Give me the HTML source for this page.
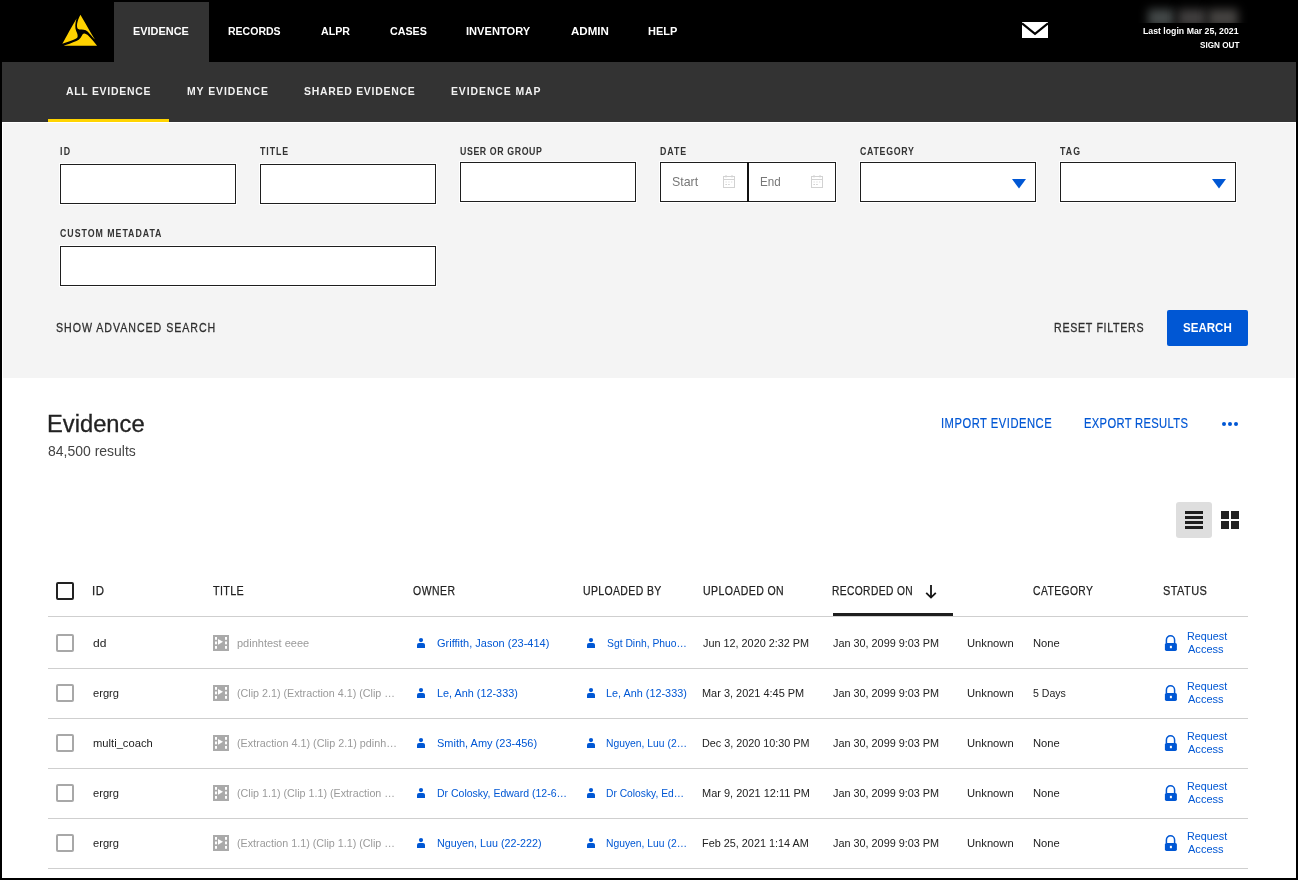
<!DOCTYPE html>
<html><head><meta charset="utf-8"><title>Evidence</title>
<style>
html,body{margin:0;padding:0;}
body{width:1298px;height:880px;overflow:hidden;position:relative;background:#fff;font-family:"Liberation Sans",sans-serif;}
.t{position:absolute;white-space:nowrap;line-height:20px;transform-origin:0 0;}
</style></head><body>
<div style="position:absolute;left:0px;top:0px;width:1298px;height:62px;background:#000"></div>
<div style="position:absolute;left:114px;top:2px;width:95px;height:60px;background:#333"></div>
<svg style="position:absolute;left:55px;top:8px" width="50" height="46" viewBox="0 0 957 880">
<path fill="#ffd200" d="M487,130 C560,260 690,480 765,605 C700,540 640,450 590,425 C540,405 470,420 435,395 C410,360 415,260 487,130 Z"/>
<path fill="#ffd200" d="M412,200 C330,340 220,540 140,685 C250,645 380,605 425,570 C445,540 430,490 405,440 C380,380 385,290 412,200 Z"/>
<path fill="#ffd200" d="M165,722 L805,722 C760,660 690,580 640,530 C600,490 555,470 530,500 C505,545 480,600 410,630 C330,665 230,700 165,722 Z"/>
</svg>
<div class="t" style="left:133.19px;top:21px;font-size:11.6px;font-weight:bold;color:#fff;transform:scaleX(0.9412);">EVIDENCE</div>
<div class="t" style="left:228.32px;top:21px;font-size:11.6px;font-weight:bold;color:#fff;transform:scaleX(0.9078);">RECORDS</div>
<div class="t" style="left:321.23px;top:21px;font-size:11.6px;font-weight:bold;color:#fff;transform:scaleX(0.9185);">ALPR</div>
<div class="t" style="left:389.97px;top:21px;font-size:11.6px;font-weight:bold;color:#fff;transform:scaleX(0.9235);">CASES</div>
<div class="t" style="left:466.18px;top:21px;font-size:11.6px;font-weight:bold;color:#fff;transform:scaleX(0.9582);">INVENTORY</div>
<div class="t" style="left:570.61px;top:21px;font-size:11.6px;font-weight:bold;color:#fff;transform:scaleX(0.9960);">ADMIN</div>
<div class="t" style="left:647.59px;top:21px;font-size:11.6px;font-weight:bold;color:#fff;transform:scaleX(0.9459);">HELP</div>
<svg style="position:absolute;left:1022px;top:22px" width="26" height="16" viewBox="0 0 26 16">
<rect x="0" y="0" width="26" height="16" fill="#fff"/>
<path d="M0,1.3 L13,11.8 L26,1.3" fill="none" stroke="#000" stroke-width="2.2"/>
</svg>
<div style="position:absolute;left:1136px;top:0;width:113px;height:23px;overflow:hidden"><div style="position:absolute;left:12px;top:9px;width:26px;height:18px;background:#434848;filter:blur(5px)"></div><div style="position:absolute;left:42px;top:9px;width:28px;height:18px;background:#403e3e;filter:blur(5px)"></div><div style="position:absolute;left:72px;top:9px;width:30px;height:18px;background:#454341;filter:blur(5px)"></div></div>
<div class="t" style="left:1143.43px;top:21px;font-size:8.7px;font-weight:bold;color:#fff;transform:scaleX(1.0044);">Last login Mar 25, 2021</div>
<div class="t" style="left:1200.05px;top:35px;font-size:8.7px;font-weight:bold;color:#fff;transform:scaleX(0.9397);">SIGN OUT</div>
<div style="position:absolute;left:0px;top:62px;width:1298px;height:60px;background:#333"></div>
<div style="position:absolute;left:48px;top:119px;width:121px;height:3px;background:#ffd400"></div>
<div class="t" style="left:65.94px;top:81px;font-size:11.6px;font-weight:bold;color:#f2f2f2;transform:scaleX(0.9000);letter-spacing:0.814px;">ALL EVIDENCE</div>
<div class="t" style="left:186.62px;top:81px;font-size:11.6px;font-weight:bold;color:#f2f2f2;transform:scaleX(0.9000);letter-spacing:1.025px;">MY EVIDENCE</div>
<div class="t" style="left:303.89px;top:81px;font-size:11.6px;font-weight:bold;color:#f2f2f2;transform:scaleX(0.9000);letter-spacing:0.821px;">SHARED EVIDENCE</div>
<div class="t" style="left:450.72px;top:81px;font-size:11.6px;font-weight:bold;color:#f2f2f2;transform:scaleX(0.9000);letter-spacing:1.014px;">EVIDENCE MAP</div>
<div style="position:absolute;left:3px;top:123px;width:1292px;height:255px;background:#f4f4f4"></div>
<div class="t" style="left:59.73px;top:142px;font-size:10px;font-weight:bold;color:#333;transform:scaleX(0.8800);letter-spacing:1.618px;">ID</div>
<div class="t" style="left:260.11px;top:142px;font-size:10px;font-weight:bold;color:#333;transform:scaleX(0.8800);letter-spacing:1.073px;">TITLE</div>
<div class="t" style="left:459.57px;top:142px;font-size:10px;font-weight:bold;color:#333;transform:scaleX(0.8800);letter-spacing:0.672px;">USER OR GROUP</div>
<div class="t" style="left:659.63px;top:142px;font-size:10px;font-weight:bold;color:#333;transform:scaleX(0.8800);letter-spacing:1.062px;">DATE</div>
<div class="t" style="left:859.75px;top:142px;font-size:10px;font-weight:bold;color:#333;transform:scaleX(0.8800);letter-spacing:0.812px;">CATEGORY</div>
<div class="t" style="left:1060.11px;top:142px;font-size:10px;font-weight:bold;color:#333;transform:scaleX(0.8800);letter-spacing:1.198px;">TAG</div>
<div class="t" style="left:60.05px;top:224px;font-size:10px;font-weight:bold;color:#333;transform:scaleX(0.8800);letter-spacing:1.108px;">CUSTOM METADATA</div>
<div style="position:absolute;left:60px;top:164px;width:176px;height:40px;background:#fff;border:1px solid #1e1e1e;box-sizing:border-box;box-shadow:0 0 0 1px #fff"></div>
<div style="position:absolute;left:260px;top:164px;width:176px;height:40px;background:#fff;border:1px solid #1e1e1e;box-sizing:border-box;box-shadow:0 0 0 1px #fff"></div>
<div style="position:absolute;left:460px;top:162px;width:176px;height:40px;background:#fff;border:1px solid #1e1e1e;box-sizing:border-box;box-shadow:0 0 0 1px #fff"></div>
<div style="position:absolute;left:660px;top:162px;width:176px;height:40px;background:#fff;border:1px solid #1e1e1e;box-sizing:border-box;box-shadow:0 0 0 1px #fff"></div>
<div style="position:absolute;left:747px;top:162px;width:2px;height:40px;background:#111"></div>
<div style="position:absolute;left:860px;top:162px;width:176px;height:40px;background:#fff;border:1px solid #1e1e1e;box-sizing:border-box;box-shadow:0 0 0 1px #fff"></div>
<div style="position:absolute;left:1060px;top:162px;width:176px;height:40px;background:#fff;border:1px solid #1e1e1e;box-sizing:border-box;box-shadow:0 0 0 1px #fff"></div>
<div style="position:absolute;left:60px;top:246px;width:376px;height:40px;background:#fff;border:1px solid #1e1e1e;box-sizing:border-box;box-shadow:0 0 0 1px #fff"></div>
<div class="t" style="left:671.64px;top:172px;font-size:13px;font-weight:normal;color:#777;transform:scaleX(0.9522);">Start</div>
<div class="t" style="left:759.67px;top:172px;font-size:13px;font-weight:normal;color:#777;transform:scaleX(0.8939);">End</div>
<svg style="position:absolute;left:723px;top:175px" width="13" height="13" viewBox="0 0 13 13">
<rect x="0.5" y="1.5" width="11" height="11" fill="none" stroke="#d2d2d2" stroke-width="1"/>
<line x1="0.5" y1="4.5" x2="11.5" y2="4.5" stroke="#d2d2d2"/>
<line x1="3" y1="0" x2="3" y2="2.5" stroke="#d2d2d2"/><line x1="9" y1="0" x2="9" y2="2.5" stroke="#d2d2d2"/>
<rect x="2.5" y="6.5" width="1.3" height="1" fill="#dcdcdc"/><rect x="5.3" y="6.5" width="1.3" height="1" fill="#dcdcdc"/><rect x="8" y="6.5" width="1.3" height="1" fill="#dcdcdc"/>
<rect x="2.5" y="9" width="1.3" height="1" fill="#c8c8c8"/><rect x="5.3" y="9" width="1.3" height="1" fill="#c8c8c8"/>
</svg>
<svg style="position:absolute;left:811px;top:175px" width="13" height="13" viewBox="0 0 13 13">
<rect x="0.5" y="1.5" width="11" height="11" fill="none" stroke="#d2d2d2" stroke-width="1"/>
<line x1="0.5" y1="4.5" x2="11.5" y2="4.5" stroke="#d2d2d2"/>
<line x1="3" y1="0" x2="3" y2="2.5" stroke="#d2d2d2"/><line x1="9" y1="0" x2="9" y2="2.5" stroke="#d2d2d2"/>
<rect x="2.5" y="6.5" width="1.3" height="1" fill="#dcdcdc"/><rect x="5.3" y="6.5" width="1.3" height="1" fill="#dcdcdc"/><rect x="8" y="6.5" width="1.3" height="1" fill="#dcdcdc"/>
<rect x="2.5" y="9" width="1.3" height="1" fill="#c8c8c8"/><rect x="5.3" y="9" width="1.3" height="1" fill="#c8c8c8"/>
</svg>
<svg style="position:absolute;left:1012px;top:179px" width="14" height="10" viewBox="0 0 14 10"><path d="M0,0 L14,0 L7,9.5 Z" fill="#0057d4"/></svg>
<svg style="position:absolute;left:1212px;top:179px" width="14" height="10" viewBox="0 0 14 10"><path d="M0,0 L14,0 L7,9.5 Z" fill="#0057d4"/></svg>
<div class="t" style="left:55.52px;top:318px;font-size:13.3px;font-weight:normal;color:#2e2e2e;transform:scaleX(0.8000);letter-spacing:1.200px;-webkit-text-stroke:0.3px #2e2e2e;">SHOW ADVANCED SEARCH</div>
<div class="t" style="left:1053.55px;top:318px;font-size:13.3px;font-weight:normal;color:#2e2e2e;transform:scaleX(0.8000);letter-spacing:0.869px;-webkit-text-stroke:0.3px #2e2e2e;">RESET FILTERS</div>
<div style="position:absolute;left:1167px;top:310px;width:81px;height:36px;background:#0057d4;border-radius:2px"></div>
<div class="t" style="left:1183.35px;top:318px;font-size:13.3px;font-weight:bold;color:#fff;transform:scaleX(0.8694);">SEARCH</div>
<div class="t" style="left:46.60px;top:414px;font-size:24.7px;font-weight:normal;color:#222;transform:scaleX(0.9609);-webkit-text-stroke:0.3px #222;">Evidence</div>
<div class="t" style="left:47.97px;top:441px;font-size:14.3px;font-weight:normal;color:#444;transform:scaleX(0.9779);">84,500 results</div>
<div class="t" style="left:941.39px;top:413px;font-size:14px;font-weight:normal;color:#0057d4;transform:scaleX(0.8000);letter-spacing:0.640px;-webkit-text-stroke:0.2px #0057d4;">IMPORT EVIDENCE</div>
<div class="t" style="left:1083.60px;top:413px;font-size:14px;font-weight:normal;color:#0057d4;transform:scaleX(0.8000);letter-spacing:0.417px;-webkit-text-stroke:0.2px #0057d4;">EXPORT RESULTS</div>
<div style="position:absolute;left:1222px;top:422px;width:4px;height:4px;background:#0057d4;border-radius:50%"></div>
<div style="position:absolute;left:1228px;top:422px;width:4px;height:4px;background:#0057d4;border-radius:50%"></div>
<div style="position:absolute;left:1234px;top:422px;width:4px;height:4px;background:#0057d4;border-radius:50%"></div>
<div style="position:absolute;left:1176px;top:502px;width:36px;height:36px;background:#dedede;border-radius:3px"></div>
<div style="position:absolute;left:1185px;top:511px;width:18px;height:3px;background:#1e1e1e"></div>
<div style="position:absolute;left:1185px;top:516px;width:18px;height:3px;background:#1e1e1e"></div>
<div style="position:absolute;left:1185px;top:521px;width:18px;height:3px;background:#1e1e1e"></div>
<div style="position:absolute;left:1185px;top:526px;width:18px;height:3px;background:#1e1e1e"></div>
<div style="position:absolute;left:1221px;top:511px;width:8px;height:8px;background:#222"></div>
<div style="position:absolute;left:1231px;top:511px;width:8px;height:8px;background:#222"></div>
<div style="position:absolute;left:1221px;top:521px;width:8px;height:8px;background:#222"></div>
<div style="position:absolute;left:1231px;top:521px;width:8px;height:8px;background:#222"></div>
<div style="position:absolute;left:56px;top:582px;width:18px;height:18px;border:2px solid #222;border-radius:2px;box-sizing:border-box"></div>
<div class="t" style="left:92.37px;top:581px;font-size:13px;font-weight:normal;color:#222;transform:scaleX(0.8786);letter-spacing:0.592px;-webkit-text-stroke:0.25px #222;">ID</div>
<div class="t" style="left:213.38px;top:581px;font-size:13px;font-weight:normal;color:#222;transform:scaleX(0.8269);letter-spacing:0.455px;-webkit-text-stroke:0.25px #222;">TITLE</div>
<div class="t" style="left:412.93px;top:581px;font-size:13px;font-weight:normal;color:#222;transform:scaleX(0.8031);letter-spacing:0.640px;-webkit-text-stroke:0.25px #222;">OWNER</div>
<div class="t" style="left:582.52px;top:581px;font-size:13px;font-weight:normal;color:#222;transform:scaleX(0.8042);letter-spacing:0.480px;-webkit-text-stroke:0.25px #222;">UPLOADED BY</div>
<div class="t" style="left:702.61px;top:581px;font-size:13px;font-weight:normal;color:#222;transform:scaleX(0.8108);letter-spacing:0.487px;-webkit-text-stroke:0.25px #222;">UPLOADED ON</div>
<div class="t" style="left:832.48px;top:581px;font-size:13px;font-weight:normal;color:#222;transform:scaleX(0.7865);letter-spacing:0.502px;-webkit-text-stroke:0.25px #222;">RECORDED ON</div>
<div class="t" style="left:1032.68px;top:581px;font-size:13px;font-weight:normal;color:#222;transform:scaleX(0.7938);letter-spacing:0.533px;-webkit-text-stroke:0.25px #222;">CATEGORY</div>
<div class="t" style="left:1162.81px;top:581px;font-size:13px;font-weight:normal;color:#222;transform:scaleX(0.8442);letter-spacing:0.507px;-webkit-text-stroke:0.25px #222;">STATUS</div>
<svg style="position:absolute;left:925px;top:585px" width="12" height="14" viewBox="0 0 12 14"><path d="M6,0 L6,12.5 M1.2,7.8 L6,12.6 L10.8,7.8" fill="none" stroke="#151515" stroke-width="1.8"/></svg>
<div style="position:absolute;left:833px;top:613px;width:120px;height:3px;background:#1e1e1e"></div>
<div style="position:absolute;left:48px;top:616px;width:1200px;height:1px;background:#cfcfcf"></div>
<div style="position:absolute;left:56px;top:634px;width:18px;height:18px;border:2px solid #a8a8a8;border-radius:2px;box-sizing:border-box"></div>
<div class="t" style="left:92.92px;top:633px;font-size:11.6px;font-weight:normal;color:#222;transform:scaleX(1.0379);">dd</div>
<svg style="position:absolute;left:213px;top:635px" width="16" height="16" viewBox="0 0 16 16"><rect width="16" height="16" fill="#aaa"/>
<rect x="2" y="2" width="2" height="2.8" fill="#fff"/><rect x="2" y="6.5" width="2" height="2.8" fill="#fff"/><rect x="2" y="11" width="2" height="2.8" fill="#fff"/>
<rect x="12" y="2" width="2" height="2.8" fill="#fff"/><rect x="12" y="6.5" width="2" height="2.8" fill="#fff"/><rect x="12" y="11" width="2" height="2.8" fill="#fff"/>
<path d="M5,4 L10,6.8 L5,9.8 Z" fill="#fff"/></svg>
<div class="t" style="left:236.68px;top:633px;font-size:11.6px;font-weight:normal;color:#9a9a9a;transform:scaleX(0.9489);">pdinhtest eeee</div>
<svg style="position:absolute;left:417px;top:638px" width="8" height="10" viewBox="0 0 8 10"><circle cx="4" cy="2.1" r="2.1" fill="#0057d4"/><path d="M0,10 L0,7 Q0,5 2,5 L6,5 Q8,5 8,7 L8,10 Z" fill="#0057d4"/></svg>
<div class="t" style="left:436.85px;top:633px;font-size:11.6px;font-weight:normal;color:#0057d4;transform:scaleX(0.9496);">Griffith, Jason (23-414)</div>
<svg style="position:absolute;left:587px;top:638px" width="8" height="10" viewBox="0 0 8 10"><circle cx="4" cy="2.1" r="2.1" fill="#0057d4"/><path d="M0,10 L0,7 Q0,5 2,5 L6,5 Q8,5 8,7 L8,10 Z" fill="#0057d4"/></svg>
<div class="t" style="left:606.83px;top:633px;font-size:11.6px;font-weight:normal;color:#0057d4;transform:scaleX(0.8923);">Sgt Dinh, Phuo…</div>
<div class="t" style="left:703.04px;top:633px;font-size:11.6px;font-weight:normal;color:#222;transform:scaleX(0.9355);">Jun 12, 2020 2:32 PM</div>
<div class="t" style="left:833.14px;top:633px;font-size:11.6px;font-weight:normal;color:#222;transform:scaleX(0.9355);">Jan 30, 2099 9:03 PM</div>
<div class="t" style="left:967.26px;top:633px;font-size:11.6px;font-weight:normal;color:#222;transform:scaleX(0.9647);">Unknown</div>
<div class="t" style="left:1032.60px;top:633px;font-size:11.6px;font-weight:normal;color:#222;transform:scaleX(0.9667);">None</div>
<svg style="position:absolute;left:1164px;top:634px" width="13" height="17" viewBox="0 0 13 17"><path d="M2.4,9.5 L2.4,5.9 A4.1,4.1 0 0 1 10.6,5.9 L10.6,9.5" fill="none" stroke="#0057d4" stroke-width="1.5"/>
<rect x="0.9" y="8.9" width="12" height="8" rx="1.6" fill="#0057d4"/><rect x="5.9" y="11.8" width="2" height="2.4" fill="#fff"/></svg>
<div class="t" style="left:1186.74px;top:626px;font-size:11px;font-weight:normal;color:#0057d4;transform:scaleX(0.9829);">Request</div>
<div class="t" style="left:1187.60px;top:639px;font-size:11px;font-weight:normal;color:#0057d4;transform:scaleX(1.0031);">Access</div>
<div style="position:absolute;left:48px;top:668px;width:1200px;height:1px;background:#cfcfcf"></div>
<div style="position:absolute;left:56px;top:684px;width:18px;height:18px;border:2px solid #a8a8a8;border-radius:2px;box-sizing:border-box"></div>
<div class="t" style="left:92.96px;top:683px;font-size:11.6px;font-weight:normal;color:#222;transform:scaleX(0.9587);">ergrg</div>
<svg style="position:absolute;left:213px;top:685px" width="16" height="16" viewBox="0 0 16 16"><rect width="16" height="16" fill="#aaa"/>
<rect x="2" y="2" width="2" height="2.8" fill="#fff"/><rect x="2" y="6.5" width="2" height="2.8" fill="#fff"/><rect x="2" y="11" width="2" height="2.8" fill="#fff"/>
<rect x="12" y="2" width="2" height="2.8" fill="#fff"/><rect x="12" y="6.5" width="2" height="2.8" fill="#fff"/><rect x="12" y="11" width="2" height="2.8" fill="#fff"/>
<path d="M5,4 L10,6.8 L5,9.8 Z" fill="#fff"/></svg>
<div class="t" style="left:236.76px;top:683px;font-size:11.6px;font-weight:normal;color:#9a9a9a;transform:scaleX(0.9256);">(Clip 2.1) (Extraction 4.1) (Clip …</div>
<svg style="position:absolute;left:417px;top:688px" width="8" height="10" viewBox="0 0 8 10"><circle cx="4" cy="2.1" r="2.1" fill="#0057d4"/><path d="M0,10 L0,7 Q0,5 2,5 L6,5 Q8,5 8,7 L8,10 Z" fill="#0057d4"/></svg>
<div class="t" style="left:436.53px;top:683px;font-size:11.6px;font-weight:normal;color:#0057d4;transform:scaleX(0.9358);">Le, Anh (12-333)</div>
<svg style="position:absolute;left:587px;top:688px" width="8" height="10" viewBox="0 0 8 10"><circle cx="4" cy="2.1" r="2.1" fill="#0057d4"/><path d="M0,10 L0,7 Q0,5 2,5 L6,5 Q8,5 8,7 L8,10 Z" fill="#0057d4"/></svg>
<div class="t" style="left:606.43px;top:683px;font-size:11.6px;font-weight:normal;color:#0057d4;transform:scaleX(0.9358);">Le, Anh (12-333)</div>
<div class="t" style="left:702.32px;top:683px;font-size:11.6px;font-weight:normal;color:#222;transform:scaleX(0.9443);">Mar 3, 2021 4:45 PM</div>
<div class="t" style="left:833.14px;top:683px;font-size:11.6px;font-weight:normal;color:#222;transform:scaleX(0.9355);">Jan 30, 2099 9:03 PM</div>
<div class="t" style="left:967.26px;top:683px;font-size:11.6px;font-weight:normal;color:#222;transform:scaleX(0.9647);">Unknown</div>
<div class="t" style="left:1033.08px;top:683px;font-size:11.6px;font-weight:normal;color:#222;transform:scaleX(0.9118);">5 Days</div>
<svg style="position:absolute;left:1164px;top:684px" width="13" height="17" viewBox="0 0 13 17"><path d="M2.4,9.5 L2.4,5.9 A4.1,4.1 0 0 1 10.6,5.9 L10.6,9.5" fill="none" stroke="#0057d4" stroke-width="1.5"/>
<rect x="0.9" y="8.9" width="12" height="8" rx="1.6" fill="#0057d4"/><rect x="5.9" y="11.8" width="2" height="2.4" fill="#fff"/></svg>
<div class="t" style="left:1186.74px;top:676px;font-size:11px;font-weight:normal;color:#0057d4;transform:scaleX(0.9829);">Request</div>
<div class="t" style="left:1187.60px;top:689px;font-size:11px;font-weight:normal;color:#0057d4;transform:scaleX(1.0031);">Access</div>
<div style="position:absolute;left:48px;top:718px;width:1200px;height:1px;background:#cfcfcf"></div>
<div style="position:absolute;left:56px;top:734px;width:18px;height:18px;border:2px solid #a8a8a8;border-radius:2px;box-sizing:border-box"></div>
<div class="t" style="left:92.67px;top:733px;font-size:11.6px;font-weight:normal;color:#222;transform:scaleX(0.9656);">multi_coach</div>
<svg style="position:absolute;left:213px;top:735px" width="16" height="16" viewBox="0 0 16 16"><rect width="16" height="16" fill="#aaa"/>
<rect x="2" y="2" width="2" height="2.8" fill="#fff"/><rect x="2" y="6.5" width="2" height="2.8" fill="#fff"/><rect x="2" y="11" width="2" height="2.8" fill="#fff"/>
<rect x="12" y="2" width="2" height="2.8" fill="#fff"/><rect x="12" y="6.5" width="2" height="2.8" fill="#fff"/><rect x="12" y="11" width="2" height="2.8" fill="#fff"/>
<path d="M5,4 L10,6.8 L5,9.8 Z" fill="#fff"/></svg>
<div class="t" style="left:236.75px;top:733px;font-size:11.6px;font-weight:normal;color:#9a9a9a;transform:scaleX(0.9295);">(Extraction 4.1) (Clip 2.1) pdinh…</div>
<svg style="position:absolute;left:417px;top:738px" width="8" height="10" viewBox="0 0 8 10"><circle cx="4" cy="2.1" r="2.1" fill="#0057d4"/><path d="M0,10 L0,7 Q0,5 2,5 L6,5 Q8,5 8,7 L8,10 Z" fill="#0057d4"/></svg>
<div class="t" style="left:436.91px;top:733px;font-size:11.6px;font-weight:normal;color:#0057d4;transform:scaleX(0.9477);">Smith, Amy (23-456)</div>
<svg style="position:absolute;left:587px;top:738px" width="8" height="10" viewBox="0 0 8 10"><circle cx="4" cy="2.1" r="2.1" fill="#0057d4"/><path d="M0,10 L0,7 Q0,5 2,5 L6,5 Q8,5 8,7 L8,10 Z" fill="#0057d4"/></svg>
<div class="t" style="left:606.47px;top:733px;font-size:11.6px;font-weight:normal;color:#0057d4;transform:scaleX(0.8909);">Nguyen, Luu (2…</div>
<div class="t" style="left:702.34px;top:733px;font-size:11.6px;font-weight:normal;color:#222;transform:scaleX(0.9316);">Dec 3, 2020 10:30 PM</div>
<div class="t" style="left:833.14px;top:733px;font-size:11.6px;font-weight:normal;color:#222;transform:scaleX(0.9355);">Jan 30, 2099 9:03 PM</div>
<div class="t" style="left:967.26px;top:733px;font-size:11.6px;font-weight:normal;color:#222;transform:scaleX(0.9647);">Unknown</div>
<div class="t" style="left:1032.60px;top:733px;font-size:11.6px;font-weight:normal;color:#222;transform:scaleX(0.9667);">None</div>
<svg style="position:absolute;left:1164px;top:734px" width="13" height="17" viewBox="0 0 13 17"><path d="M2.4,9.5 L2.4,5.9 A4.1,4.1 0 0 1 10.6,5.9 L10.6,9.5" fill="none" stroke="#0057d4" stroke-width="1.5"/>
<rect x="0.9" y="8.9" width="12" height="8" rx="1.6" fill="#0057d4"/><rect x="5.9" y="11.8" width="2" height="2.4" fill="#fff"/></svg>
<div class="t" style="left:1186.74px;top:726px;font-size:11px;font-weight:normal;color:#0057d4;transform:scaleX(0.9829);">Request</div>
<div class="t" style="left:1187.60px;top:739px;font-size:11px;font-weight:normal;color:#0057d4;transform:scaleX(1.0031);">Access</div>
<div style="position:absolute;left:48px;top:768px;width:1200px;height:1px;background:#cfcfcf"></div>
<div style="position:absolute;left:56px;top:784px;width:18px;height:18px;border:2px solid #a8a8a8;border-radius:2px;box-sizing:border-box"></div>
<div class="t" style="left:92.96px;top:783px;font-size:11.6px;font-weight:normal;color:#222;transform:scaleX(0.9587);">ergrg</div>
<svg style="position:absolute;left:213px;top:785px" width="16" height="16" viewBox="0 0 16 16"><rect width="16" height="16" fill="#aaa"/>
<rect x="2" y="2" width="2" height="2.8" fill="#fff"/><rect x="2" y="6.5" width="2" height="2.8" fill="#fff"/><rect x="2" y="11" width="2" height="2.8" fill="#fff"/>
<rect x="12" y="2" width="2" height="2.8" fill="#fff"/><rect x="12" y="6.5" width="2" height="2.8" fill="#fff"/><rect x="12" y="11" width="2" height="2.8" fill="#fff"/>
<path d="M5,4 L10,6.8 L5,9.8 Z" fill="#fff"/></svg>
<div class="t" style="left:236.76px;top:783px;font-size:11.6px;font-weight:normal;color:#9a9a9a;transform:scaleX(0.9256);">(Clip 1.1) (Clip 1.1) (Extraction …</div>
<svg style="position:absolute;left:417px;top:788px" width="8" height="10" viewBox="0 0 8 10"><circle cx="4" cy="2.1" r="2.1" fill="#0057d4"/><path d="M0,10 L0,7 Q0,5 2,5 L6,5 Q8,5 8,7 L8,10 Z" fill="#0057d4"/></svg>
<div class="t" style="left:436.56px;top:783px;font-size:11.6px;font-weight:normal;color:#0057d4;transform:scaleX(0.9060);">Dr Colosky, Edward (12-6…</div>
<svg style="position:absolute;left:587px;top:788px" width="8" height="10" viewBox="0 0 8 10"><circle cx="4" cy="2.1" r="2.1" fill="#0057d4"/><path d="M0,10 L0,7 Q0,5 2,5 L6,5 Q8,5 8,7 L8,10 Z" fill="#0057d4"/></svg>
<div class="t" style="left:606.48px;top:783px;font-size:11.6px;font-weight:normal;color:#0057d4;transform:scaleX(0.8854);">Dr Colosky, Ed…</div>
<div class="t" style="left:702.32px;top:783px;font-size:11.6px;font-weight:normal;color:#222;transform:scaleX(0.9486);">Mar 9, 2021 12:11 PM</div>
<div class="t" style="left:833.14px;top:783px;font-size:11.6px;font-weight:normal;color:#222;transform:scaleX(0.9355);">Jan 30, 2099 9:03 PM</div>
<div class="t" style="left:967.26px;top:783px;font-size:11.6px;font-weight:normal;color:#222;transform:scaleX(0.9647);">Unknown</div>
<div class="t" style="left:1032.60px;top:783px;font-size:11.6px;font-weight:normal;color:#222;transform:scaleX(0.9667);">None</div>
<svg style="position:absolute;left:1164px;top:784px" width="13" height="17" viewBox="0 0 13 17"><path d="M2.4,9.5 L2.4,5.9 A4.1,4.1 0 0 1 10.6,5.9 L10.6,9.5" fill="none" stroke="#0057d4" stroke-width="1.5"/>
<rect x="0.9" y="8.9" width="12" height="8" rx="1.6" fill="#0057d4"/><rect x="5.9" y="11.8" width="2" height="2.4" fill="#fff"/></svg>
<div class="t" style="left:1186.74px;top:776px;font-size:11px;font-weight:normal;color:#0057d4;transform:scaleX(0.9829);">Request</div>
<div class="t" style="left:1187.60px;top:789px;font-size:11px;font-weight:normal;color:#0057d4;transform:scaleX(1.0031);">Access</div>
<div style="position:absolute;left:48px;top:818px;width:1200px;height:1px;background:#cfcfcf"></div>
<div style="position:absolute;left:56px;top:834px;width:18px;height:18px;border:2px solid #a8a8a8;border-radius:2px;box-sizing:border-box"></div>
<div class="t" style="left:92.96px;top:833px;font-size:11.6px;font-weight:normal;color:#222;transform:scaleX(0.9587);">ergrg</div>
<svg style="position:absolute;left:213px;top:835px" width="16" height="16" viewBox="0 0 16 16"><rect width="16" height="16" fill="#aaa"/>
<rect x="2" y="2" width="2" height="2.8" fill="#fff"/><rect x="2" y="6.5" width="2" height="2.8" fill="#fff"/><rect x="2" y="11" width="2" height="2.8" fill="#fff"/>
<rect x="12" y="2" width="2" height="2.8" fill="#fff"/><rect x="12" y="6.5" width="2" height="2.8" fill="#fff"/><rect x="12" y="11" width="2" height="2.8" fill="#fff"/>
<path d="M5,4 L10,6.8 L5,9.8 Z" fill="#fff"/></svg>
<div class="t" style="left:236.76px;top:833px;font-size:11.6px;font-weight:normal;color:#9a9a9a;transform:scaleX(0.9256);">(Extraction 1.1) (Clip 1.1) (Clip …</div>
<svg style="position:absolute;left:417px;top:838px" width="8" height="10" viewBox="0 0 8 10"><circle cx="4" cy="2.1" r="2.1" fill="#0057d4"/><path d="M0,10 L0,7 Q0,5 2,5 L6,5 Q8,5 8,7 L8,10 Z" fill="#0057d4"/></svg>
<div class="t" style="left:436.54px;top:833px;font-size:11.6px;font-weight:normal;color:#0057d4;transform:scaleX(0.9273);">Nguyen, Luu (22-222)</div>
<svg style="position:absolute;left:587px;top:838px" width="8" height="10" viewBox="0 0 8 10"><circle cx="4" cy="2.1" r="2.1" fill="#0057d4"/><path d="M0,10 L0,7 Q0,5 2,5 L6,5 Q8,5 8,7 L8,10 Z" fill="#0057d4"/></svg>
<div class="t" style="left:606.47px;top:833px;font-size:11.6px;font-weight:normal;color:#0057d4;transform:scaleX(0.8909);">Nguyen, Luu (2…</div>
<div class="t" style="left:702.33px;top:833px;font-size:11.6px;font-weight:normal;color:#222;transform:scaleX(0.9360);">Feb 25, 2021 1:14 AM</div>
<div class="t" style="left:833.14px;top:833px;font-size:11.6px;font-weight:normal;color:#222;transform:scaleX(0.9355);">Jan 30, 2099 9:03 PM</div>
<div class="t" style="left:967.26px;top:833px;font-size:11.6px;font-weight:normal;color:#222;transform:scaleX(0.9647);">Unknown</div>
<div class="t" style="left:1032.60px;top:833px;font-size:11.6px;font-weight:normal;color:#222;transform:scaleX(0.9667);">None</div>
<svg style="position:absolute;left:1164px;top:834px" width="13" height="17" viewBox="0 0 13 17"><path d="M2.4,9.5 L2.4,5.9 A4.1,4.1 0 0 1 10.6,5.9 L10.6,9.5" fill="none" stroke="#0057d4" stroke-width="1.5"/>
<rect x="0.9" y="8.9" width="12" height="8" rx="1.6" fill="#0057d4"/><rect x="5.9" y="11.8" width="2" height="2.4" fill="#fff"/></svg>
<div class="t" style="left:1186.74px;top:826px;font-size:11px;font-weight:normal;color:#0057d4;transform:scaleX(0.9829);">Request</div>
<div class="t" style="left:1187.60px;top:839px;font-size:11px;font-weight:normal;color:#0057d4;transform:scaleX(1.0031);">Access</div>
<div style="position:absolute;left:48px;top:868px;width:1200px;height:1px;background:#cfcfcf"></div>
<div style="position:absolute;left:0px;top:0px;width:2px;height:880px;background:#000"></div>
<div style="position:absolute;left:1296px;top:0px;width:2px;height:880px;background:#000"></div>
<div style="position:absolute;left:0px;top:878px;width:1298px;height:2px;background:#000"></div>
</body></html>
